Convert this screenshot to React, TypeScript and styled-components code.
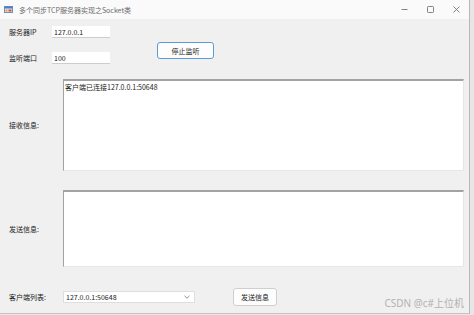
import styled, { createGlobalStyle } from 'styled-components';

const GlobalStyle = createGlobalStyle`
  html, body {
    margin: 0;
    padding: 0;
  }

  body {
    background: #e6e6e6;
    font-family: "Noto Sans CJK SC", "Noto Sans", sans-serif;
  }
`;

const Page = styled.div`
  display: flex;
  width: 474px;
  height: 315px;
  overflow: hidden;
`;

const Window = styled.div`
  width: 470px;
  height: 314px;
  box-sizing: border-box;
  display: flex;
  flex-direction: column;
  background: #f0f0f0;
  border-right: 1px solid #b8b8b8;
  border-bottom: 1px solid #c4c4c4;
`;

const TitleBar = styled.div`
  height: 19px;
  flex-shrink: 0;
  display: flex;
  align-items: center;
  gap: 6px;
  padding-left: 4px;
  background: #fafafa;
  color: #6a6a6a;
  font-size: 7px;
`;

const TitleControls = styled.div`
  display: flex;
  margin-left: auto;
  height: 100%;
`;

const ControlButton = styled.div`
  width: 26px;
  height: 100%;
  display: flex;
  align-items: center;
  justify-content: center;
`;

const Body = styled.div`
  flex: 1;
  display: flex;
  flex-direction: column;
  padding: 7px 5px 0 9px;
  color: #1a1a1a;
  font-size: 7px;
`;

const TopSection = styled.div`
  display: flex;
  align-items: flex-start;
`;

const FieldStack = styled.div`
  display: flex;
  flex-direction: column;
  gap: 14px;
`;

const FieldRow = styled.div`
  display: flex;
  align-items: center;
  height: 12px;
`;

const Label = styled.span<{ $width: number }>`
  width: ${(p) => p.$width}px;
  flex-shrink: 0;
  white-space: nowrap;
`;

const SmallInput = styled.div`
  width: 58px;
  height: 12px;
  box-sizing: border-box;
  display: flex;
  align-items: center;
  padding-left: 2px;
  background: #fff;
  border-bottom: 1px solid #cdcdcd;
`;

const Button = styled.button<{ $accent?: boolean; $width: number; $height: number }>`
  width: ${(p) => p.$width}px;
  height: ${(p) => p.$height}px;
  padding: 0;
  display: flex;
  align-items: center;
  justify-content: center;
  background: #fdfdfd;
  border: 1px solid ${(p) => (p.$accent ? '#5b9ad6' : '#cfcfcf')};
  border-radius: 3px;
  color: #1a1a1a;
  font-family: "Noto Sans CJK SC", "Noto Sans", sans-serif;
  font-size: 7px;
`;

const StopButton = styled(Button)`
  margin-left: 47px;
  margin-top: 16px;
`;

const BoxRow = styled.div<{ $top: number; $height: number }>`
  display: grid;
  grid-template-columns: 54px 1fr;
  align-items: center;
  margin-top: ${(p) => p.$top}px;
  height: ${(p) => p.$height}px;
`;

const TextArea = styled.div`
  height: 100%;
  box-sizing: border-box;
  padding: 2px 1px;
  background: #fff;
  border-top: 2px solid #a3a3a3;
  border-left: 1px solid #a3a3a3;
  border-right: 1px solid #e6e6e6;
  border-bottom: 1px solid #e6e6e6;
  line-height: 9px;
`;

const BottomRow = styled.div`
  display: flex;
  align-items: center;
  height: 18px;
  margin-top: 21px;
`;

const Combo = styled.div`
  width: 132px;
  height: 12px;
  box-sizing: border-box;
  display: flex;
  align-items: center;
  justify-content: space-between;
  padding: 0 4px 0 2px;
  background: #fff;
  border: 1px solid #dedede;
`;

const SendButton = styled(Button)`
  margin-left: 38px;
`;

const Watermark = styled.span`
  margin-left: auto;
  align-self: flex-end;
  margin-bottom: -3px;
  line-height: 12px;
  color: #b2b2b2;
  font-family: "Noto Sans", "Noto Sans CJK SC", sans-serif;
  font-size: 10px;
  white-space: nowrap;
`;

function AppIcon() {
  return (
    <svg width="9" height="9" viewBox="0 0 9 9">
      <rect x="0.5" y="1.5" width="8" height="6" fill="#dfe8f5" stroke="#6d8fc0" strokeWidth="1" />
      <rect x="0.5" y="1.5" width="8" height="2" fill="#4f7fc8" />
      <rect x="1.5" y="4.5" width="2" height="2" fill="#e0a526" />
      <rect x="4.5" y="4.5" width="3" height="2" fill="#d94a3a" />
    </svg>
  );
}

export default function App() {
  return (
    <>
      <GlobalStyle />
      <Page>
        <Window>
          <TitleBar>
            <AppIcon />
            <span>多个同步TCP服务器实现之Socket类</span>
            <TitleControls>
              <ControlButton>
                <svg width="7" height="7" viewBox="0 0 7 7">
                  <line x1="0.5" y1="3.5" x2="6.5" y2="3.5" stroke="#666" strokeWidth="0.8" />
                </svg>
              </ControlButton>
              <ControlButton>
                <svg width="7" height="7" viewBox="0 0 7 7">
                  <rect x="0.5" y="0.5" width="6" height="6" rx="0.8" fill="none" stroke="#666" strokeWidth="0.8" />
                </svg>
              </ControlButton>
              <ControlButton>
                <svg width="7" height="7" viewBox="0 0 7 7">
                  <path d="M0.5 0.5 L6.5 6.5 M6.5 0.5 L0.5 6.5" stroke="#666" strokeWidth="0.8" />
                </svg>
              </ControlButton>
            </TitleControls>
          </TitleBar>

          <Body>
            <TopSection>
              <FieldStack>
                <FieldRow>
                  <Label $width={43}>服务器IP</Label>
                  <SmallInput>127.0.0.1</SmallInput>
                </FieldRow>
                <FieldRow>
                  <Label $width={43}>监听端口</Label>
                  <SmallInput>100</SmallInput>
                </FieldRow>
              </FieldStack>
              <StopButton $accent $width={57} $height={17}>
                停止监听
              </StopButton>
            </TopSection>

            <BoxRow $top={15} $height={92}>
              <Label $width={54}>接收信息:</Label>
              <TextArea>客户端已连接127.0.0.1:50648</TextArea>
            </BoxRow>

            <BoxRow $top={19} $height={77}>
              <Label $width={54}>发送信息:</Label>
              <TextArea />
            </BoxRow>

            <BottomRow>
              <Label $width={54}>客户端列表:</Label>
              <Combo>
                <span>127.0.0.1:50648</span>
                <svg width="6" height="4" viewBox="0 0 6 4">
                  <path d="M0.5 0.8 L3 3.2 L5.5 0.8" fill="none" stroke="#777" strokeWidth="0.8" />
                </svg>
              </Combo>
              <SendButton $width={44} $height={18}>
                发送信息
              </SendButton>
              <Watermark>CSDN @c#上位机</Watermark>
            </BottomRow>
          </Body>
        </Window>
      </Page>
    </>
  );
}
